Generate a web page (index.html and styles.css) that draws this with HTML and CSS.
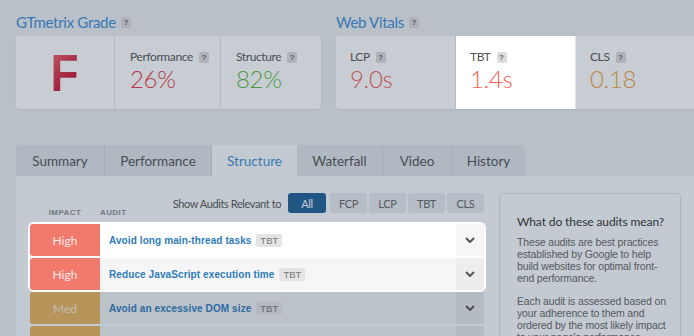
FILE: index.html
```html
<!DOCTYPE html>
<html lang="en">
<head>
    <meta charset="UTF-8">
    <meta name="viewport" content="width=device-width, initial-scale=1.0">
    <title>GTmetrix Report</title>
    <link rel="stylesheet" href="styles.css">
</head>
<body>
    <div class="overlay"></div>
    <div class="page">
        <div class="scores">
            <section class="score-block">
                <h2 class="block-title">GTmetrix Grade <span class="help">?</span></h2>
                <div class="card grade-card">
                    <div class="cell grade-cell"><span class="grade-letter">F</span></div>
                    <div class="cell metric perf">
                        <div class="label">Performance <span class="help">?</span></div>
                        <div class="value red">26%</div>
                    </div>
                    <div class="cell metric struct">
                        <div class="label">Structure <span class="help">?</span></div>
                        <div class="value green">82%</div>
                    </div>
                </div>
            </section>
            <section class="score-block">
                <h2 class="block-title">Web Vitals <span class="help">?</span></h2>
                <div class="card vitals-card">
                    <div class="cell metric vital">
                        <div class="label">LCP <span class="help">?</span></div>
                        <div class="value salmon">9.0s</div>
                    </div>
                    <div class="cell metric vital lit">
                        <div class="label">TBT <span class="help">?</span></div>
                        <div class="value salmon">1.4s</div>
                    </div>
                    <div class="cell metric vital">
                        <div class="label">CLS <span class="help">?</span></div>
                        <div class="value orange">0.18</div>
                    </div>
                </div>
            </section>
        </div>

        <nav class="tabs">
            <a href="#" class="tab t-summary">Summary</a>
            <a href="#" class="tab t-perf">Performance</a>
            <a href="#" class="tab t-struct active">Structure</a>
            <a href="#" class="tab t-water">Waterfall</a>
            <a href="#" class="tab t-video">Video</a>
            <a href="#" class="tab t-history">History</a>
        </nav>

        <div class="panel">
            <div class="audits">
                <div class="audit-top">
                    <div class="col-heads">
                        <span class="head-impact">IMPACT</span>
                        <span class="head-audit">AUDIT</span>
                    </div>
                    <div class="filter">
                        <span class="filter-label">Show Audits Relevant to</span>
                        <button class="filter-btn on">All</button>
                        <button class="filter-btn">FCP</button>
                        <button class="filter-btn">LCP</button>
                        <button class="filter-btn">TBT</button>
                        <button class="filter-btn">CLS</button>
                    </div>
                </div>

                <div class="audit-list">
                    <div class="lit-group">
                        <div class="audit-row">
                            <span class="impact high">High</span>
                            <span class="audit-name">Avoid long main-thread tasks <span class="tag">TBT</span></span>
                            <span class="toggle"><svg width="10" height="6" viewBox="0 0 10 6"><polyline points="1,1 5,5 9,1" fill="none" stroke="#555" stroke-width="2"/></svg></span>
                        </div>
                        <div class="audit-row even">
                            <span class="impact high">High</span>
                            <span class="audit-name">Reduce JavaScript execution time <span class="tag">TBT</span></span>
                            <span class="toggle"><svg width="10" height="6" viewBox="0 0 10 6"><polyline points="1,1 5,5 9,1" fill="none" stroke="#555" stroke-width="2"/></svg></span>
                        </div>
                    </div>
                    <div class="audit-row dim">
                        <span class="impact med">Med</span>
                        <span class="audit-name">Avoid an excessive DOM size <span class="tag">TBT</span></span>
                        <span class="toggle"><svg width="10" height="6" viewBox="0 0 10 6"><polyline points="1,1 5,5 9,1" fill="none" stroke="#555" stroke-width="2"/></svg></span>
                    </div>
                    <div class="audit-row dim">
                        <span class="impact med"></span>
                        <span class="audit-name"></span>
                        <span class="toggle"></span>
                    </div>
                </div>
            </div>

            <aside class="info">
                <h3>What do these audits mean?</h3>
                <p>These audits are best practices established by Google to help build websites for optimal front-end performance.</p>
                <p>Each audit is assessed based on your adherence to them and ordered by the most likely impact to your page's performance.</p>
            </aside>
        </div>
    </div>
</body>
</html>
```

FILE: styles.css
```css
body {
    margin: 0;
    background: #eceef1;
    font-family: 'Lato', 'Liberation Sans', sans-serif;
    color: #555;
    overflow: hidden;
}
.overlay {
    position: fixed;
    top: 0;
    left: 0;
    right: 0;
    bottom: 0;
    background: rgba(35, 55, 80, 0.25);
    z-index: 10;
}
.page {
    padding: 12px 0 0 16px;
    width: 720px;
}
.scores {
    display: flex;
    gap: 15px;
}
.block-title {
    margin: 0 0 4px;
    font-size: 15px;
    font-weight: 400;
    line-height: 20px;
    color: #3d8fd6;
    letter-spacing: -0.3px;
    display: flex;
    align-items: center;
    gap: 5px;
}
.help {
    display: inline-block;
    width: 10px;
    height: 11px;
    line-height: 11px;
    border-radius: 2px;
    background: #dcdcdc;
    color: #666;
    font-family: 'Liberation Sans', sans-serif;
    font-size: 8px;
    font-weight: 700;
    text-align: center;
    letter-spacing: 0;
}
.card {
    display: flex;
    background: #fff;
    border-radius: 4px;
    height: 73px;
    box-shadow: 0 1px 2px rgba(0, 0, 0, 0.08);
}
.grade-card {
    width: 305px;
}
.vitals-card {
    width: 380px;
}
.cell {
    box-sizing: border-box;
    border-right: 1px solid #e2e4e8;
}
.cell:last-child {
    border-right: none;
}
.grade-cell {
    width: 99px;
    display: flex;
    align-items: center;
    justify-content: center;
}
.grade-letter {
    font-family: 'Liberation Sans', sans-serif;
    font-size: 51px;
    font-weight: 700;
    line-height: 1;
    background: linear-gradient(135deg, #f06a74, #c8102e 70%);
    -webkit-background-clip: text;
    background-clip: text;
    color: transparent;
    margin-top: 1px;
    transform: scaleX(0.9);
}
.metric {
    padding: 13px 0 0 15px;
}
.perf {
    width: 106px;
}
.struct {
    width: 100px;
}
.vital {
    width: 120px;
    padding-left: 14px;
}
.lit {
    position: relative;
    z-index: 20;
    background: #fff;
}
.label {
    font-size: 12px;
    line-height: 16px;
    color: #555;
    letter-spacing: -0.4px;
    white-space: nowrap;
    display: flex;
    align-items: center;
    gap: 6px;
}
.value {
    font-size: 24px;
    font-weight: 300;
    line-height: 28px;
    letter-spacing: -0.3px;
}
.red { color: #e53946; }
.green { color: #5cb944; }
.salmon { color: #f05d57; }
.orange { color: #eca640; }

.tabs {
    display: flex;
    margin-top: 36px;
    height: 31px;
}
.tab {
    display: flex;
    align-items: center;
    justify-content: center;
    box-sizing: border-box;
    background: #dfe3e8;
    color: #555;
    font-size: 13.5px;
    text-decoration: none;
    border-right: 1px solid #d0d5db;
}
.t-summary { width: 89px; border-top-left-radius: 3px; }
.t-perf { width: 107px; }
.t-struct { width: 85px; }
.t-water { width: 86px; }
.t-video { width: 69px; }
.t-history { width: 73px; border-right: none; border-top-right-radius: 4px; }
.tab.active {
    background: #fafbfc;
    color: #3d8fd6;
    border-right: none;
}

.panel {
    background: #fafbfc;
    display: flex;
    gap: 15px;
    padding: 17px 0 0 14px;
    height: 200px;
}
.audits {
    width: 454px;
}
.audit-top {
    display: flex;
    justify-content: space-between;
    align-items: flex-end;
    height: 20px;
    margin-bottom: 11px;
}
.col-heads {
    display: flex;
    font-family: 'Liberation Sans', sans-serif;
    font-size: 8px;
    font-weight: 700;
    color: #8a8e93;
    letter-spacing: 0.4px;
    line-height: 10px;
    margin-bottom: -5px;
}
.head-impact {
    width: 70px;
    text-align: center;
}
.filter {
    display: flex;
    align-items: center;
    gap: 2px;
}
.filter-label {
    font-size: 11px;
    color: #555;
    margin-right: 5px;
    letter-spacing: -0.4px;
}
.filter-btn {
    font-family: 'Lato', sans-serif;
    font-size: 11px;
    width: 37px;
    height: 20px;
    padding: 0;
    border: none;
    border-radius: 3px;
    background: #e7eaee;
    color: #666;
    letter-spacing: -0.3px;
}
.filter-btn.on {
    background: #1f5f96;
    color: #fff;
    width: 38px;
    margin-right: 2px;
}
.audit-list {
    display: flex;
    flex-direction: column;
    gap: 2px;
}
.lit-group {
    position: relative;
    z-index: 20;
    display: flex;
    flex-direction: column;
    gap: 2px;
    background: #fff;
    border-radius: 6px;
    padding: 2px;
    margin: -2px -2px;
}
.audit-row {
    display: flex;
    align-items: center;
    height: 32px;
    background: #fff;
}
.audit-row.even {
    background: #f6f6f6;
}
.audit-row.dim {
    background: #eef0f3;
}
.impact {
    width: 70px;
    height: 100%;
    display: flex;
    align-items: center;
    justify-content: center;
    font-size: 12px;
    color: #fde8e6;
    border-radius: 3px 0 0 3px;
}
.impact.high { background: #f27a6d; }
.impact.med { background: #e8b35c; color: #f6ead6; }
.audit-name {
    flex: 1;
    padding-left: 9px;
    font-family: 'Liberation Sans', sans-serif;
    font-size: 10px;
    font-weight: 700;
    color: #2e7cbb;
    letter-spacing: 0.1px;
}
.tag {
    display: inline-block;
    background: #e4e4e4;
    color: #777;
    font-weight: 400;
    font-size: 9.5px;
    padding: 1px 4px;
    border-radius: 2px;
    margin-left: 2px;
    letter-spacing: 0;
}
.toggle {
    width: 28px;
    height: 100%;
    display: flex;
    align-items: center;
    justify-content: center;
    background: rgba(0, 0, 0, 0.035);
}

.info {
    box-sizing: border-box;
    width: 182px;
    height: 200px;
    border: 1px solid #dde1e6;
    border-radius: 3px;
    padding: 20px 8px 0 17px;
    font-family: 'Liberation Sans', sans-serif;
}
.info h3 {
    margin: 0 0 7px;
    font-family: 'Lato', sans-serif;
    font-size: 12px;
    font-weight: 400;
    color: #333;
    line-height: 15px;
    letter-spacing: -0.1px;
    white-space: nowrap;
}
.info p {
    margin: 0 0 11px;
    font-size: 10.5px;
    line-height: 12px;
    color: #666;
    width: 150px;
    letter-spacing: -0.15px;
}
```
